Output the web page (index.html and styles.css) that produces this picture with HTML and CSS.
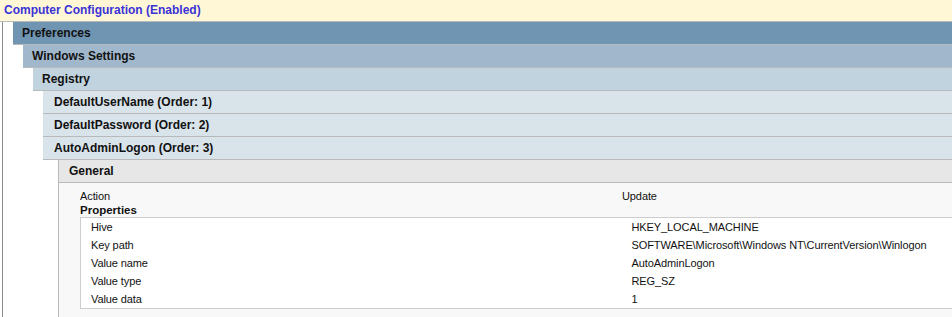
FILE: index.html
```html
<!DOCTYPE html>
<html lang="en">
<head>
    <meta charset="UTF-8" />
    <title>Group Policy Report – Registry Preferences</title>
    <link rel="stylesheet" href="styles.css">
</head>
<body>
<div class="he0">Computer Configuration (Enabled)</div>
<div class="tree">
    <div class="he1">Preferences</div>
    <div class="level">
        <div class="he2">Windows Settings</div>
        <div class="level">
            <div class="he3">Registry</div>
            <div class="level">
                <div class="he4">DefaultUserName (Order: 1)</div>
                <div class="he4">DefaultPassword (Order: 2)</div>
                <div class="he4">AutoAdminLogon (Order: 3)</div>
                <div class="general">
                    <div class="he5">General</div>
                    <div class="container">
                        <div class="row">
                            <span>Action</span>
                            <span>Update</span>
                        </div>
                        <div class="subtitle">Properties</div>
                        <table class="props">
                            <tr><td>Hive</td><td>HKEY_LOCAL_MACHINE</td></tr>
                            <tr><td>Key path</td><td>SOFTWARE\Microsoft\Windows NT\CurrentVersion\Winlogon</td></tr>
                            <tr><td>Value name</td><td>AutoAdminLogon</td></tr>
                            <tr><td>Value type</td><td>REG_SZ</td></tr>
                            <tr><td>Value data</td><td>1</td></tr>
                        </table>
                    </div>
                </div>
            </div>
        </div>
    </div>
</div>
</body>
</html>
```

FILE: styles.css
```css
html {
    overflow: hidden;
}
body {
    font-family: "Liberation Sans", Arial, sans-serif;
    font-size: 11px;
    color: #111;
    margin: 0;
    background-color: #fff;
    height: 317px;
}
.he0, .he1, .he2, .he3, .he4, .he5 {
    font-size: 12px;
    font-weight: bold;
    height: 22px;
    line-height: 22px;
    padding-left: 9px;
    border-bottom: 1px solid #b7b9bb;
    white-space: nowrap;
}
.he0 {
    height: 21px;
    line-height: 20px;
    padding-left: 4px;
    background-color: #fff7d6;
    color: #3a33d6;
}
.tree {
    margin-left: 2px;
    border-left: 1px solid #8a8a8a;
    height: 295px;
    padding-left: 10px;
}
.he1 {
    background-color: #6f95b3;
}
.he2 {
    background-color: #a1b8cc;
}
.he3 {
    background-color: #c1d3df;
}
.he4 {
    background-color: #d9e3ea;
    padding-left: 11px;
}
.he5 {
    background-color: #e7e7e7;
    padding-left: 10px;
}
.level {
    margin-left: 10px;
}
.general {
    margin-left: 15px;
    border-left: 1px solid #b9b9b9;
    background-color: #f8f8f8;
    height: 157px;
}
.container {
    padding: 6px 0 0 21px;
}
.row {
    display: grid;
    grid-template-columns: 542px 1fr;
    line-height: 14px;
    letter-spacing: -0.1px;
}
.subtitle {
    font-weight: bold;
    font-size: 11.5px;
    line-height: 14px;
}
.props {
    border-collapse: collapse;
    background-color: #fff;
    border: 1px solid #cdcdcd;
    border-right: none;
    width: 100%;
    letter-spacing: -0.1px;
}
.props td {
    padding: 0 0 0 10px;
    height: 18px;
    line-height: 18px;
    white-space: nowrap;
}
.props td:first-child {
    width: 541px;
    box-sizing: border-box;
}
```
